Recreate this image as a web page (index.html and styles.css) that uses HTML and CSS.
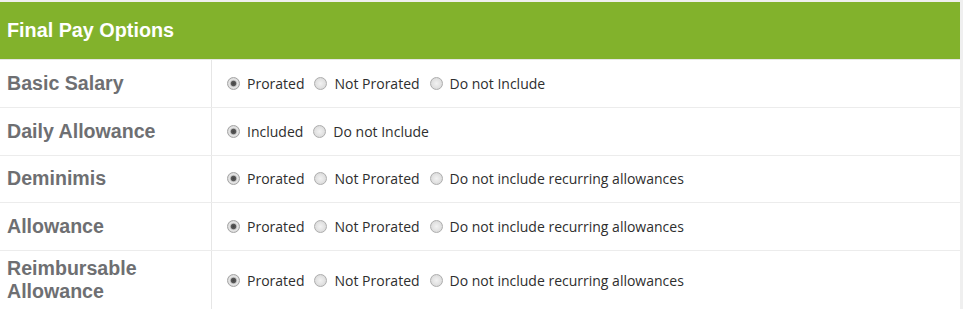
FILE: index.html
```html
<!DOCTYPE html>
<html>
<head>
<meta charset="utf-8">
<link rel="stylesheet" href="styles.css">
</head>
<body>
<div class="panel">
  <div class="panel-head">Final Pay Options</div>
  <div class="row">
    <div class="label">Basic Salary</div>
    <div class="opts">
      <span class="opt"><span class="radio checked"></span>Prorated</span>
      <span class="opt"><span class="radio"></span>Not Prorated</span>
      <span class="opt"><span class="radio"></span>Do not Include</span>
    </div>
  </div>
  <div class="row">
    <div class="label">Daily Allowance</div>
    <div class="opts">
      <span class="opt"><span class="radio checked"></span>Included</span>
      <span class="opt"><span class="radio"></span>Do not Include</span>
    </div>
  </div>
  <div class="row">
    <div class="label">Deminimis</div>
    <div class="opts">
      <span class="opt"><span class="radio checked"></span>Prorated</span>
      <span class="opt"><span class="radio"></span>Not Prorated</span>
      <span class="opt"><span class="radio"></span>Do not include recurring allowances</span>
    </div>
  </div>
  <div class="row">
    <div class="label">Allowance</div>
    <div class="opts">
      <span class="opt"><span class="radio checked"></span>Prorated</span>
      <span class="opt"><span class="radio"></span>Not Prorated</span>
      <span class="opt"><span class="radio"></span>Do not include recurring allowances</span>
    </div>
  </div>
  <div class="row row-tall">
    <div class="label">Reimbursable Allowance</div>
    <div class="opts">
      <span class="opt"><span class="radio checked"></span>Prorated</span>
      <span class="opt"><span class="radio"></span>Not Prorated</span>
      <span class="opt"><span class="radio"></span>Do not include recurring allowances</span>
    </div>
  </div>
</div>
</body>
</html>
```
FILE: styles.css
```css
html, body {
  margin: 0;
  padding: 0;
  background: #efefef;
  overflow: hidden;
}
.panel {
  width: 960px;
  margin-top: 2px;
  background: #ffffff;
  min-height: 320px;
}
.panel-head {
  box-sizing: border-box;
  height: 58px;
  background: #82b22c;
  color: #ffffff;
  font-family: "Liberation Sans", Arial, sans-serif;
  font-weight: bold;
  font-size: 19.8px;
  display: flex;
  align-items: center;
  padding-left: 7px;
  padding-bottom: 1px;
  border-bottom: 1px solid #e6e6e6;
}
.row {
  display: grid;
  grid-template-columns: 212px 1fr;
  border-bottom: 1px solid #ececec;
  min-height: 46.75px;
}
.row-tall {
  min-height: 58px;
}
.label {
  border-right: 1px solid #e6e6e6;
  font-family: "Liberation Sans", Arial, sans-serif;
  font-weight: bold;
  font-size: 19.6px;
  line-height: 23px;
  color: #6e6f72;
  padding: 0 7px;
  display: flex;
  align-items: center;
}
.opts {
  display: flex;
  align-items: center;
  padding-left: 15px;
  gap: 10px;
  font-family: "Open Sans", "Noto Sans", sans-serif;
  font-size: 14px;
  color: #2e2e2e;
}
.opt {
  display: inline-flex;
  align-items: center;
}
.radio {
  width: 13px;
  height: 13px;
  border-radius: 50%;
  box-sizing: border-box;
  border: 1px solid #adadad;
  background: radial-gradient(circle at 50% 50%, #f2f2f2 0%, #e0e0e0 60%, #cfcfcf 100%);
  margin-right: 7px;
  flex: none;
}
.radio.checked {
  border-color: #a4a4a4;
  background: radial-gradient(circle at 50% 50%, #444444 0, #595959 2.3px, #c4c4c4 3.2px, #e6e6e6 4.2px, #d4d4d4 6px);
}
```
